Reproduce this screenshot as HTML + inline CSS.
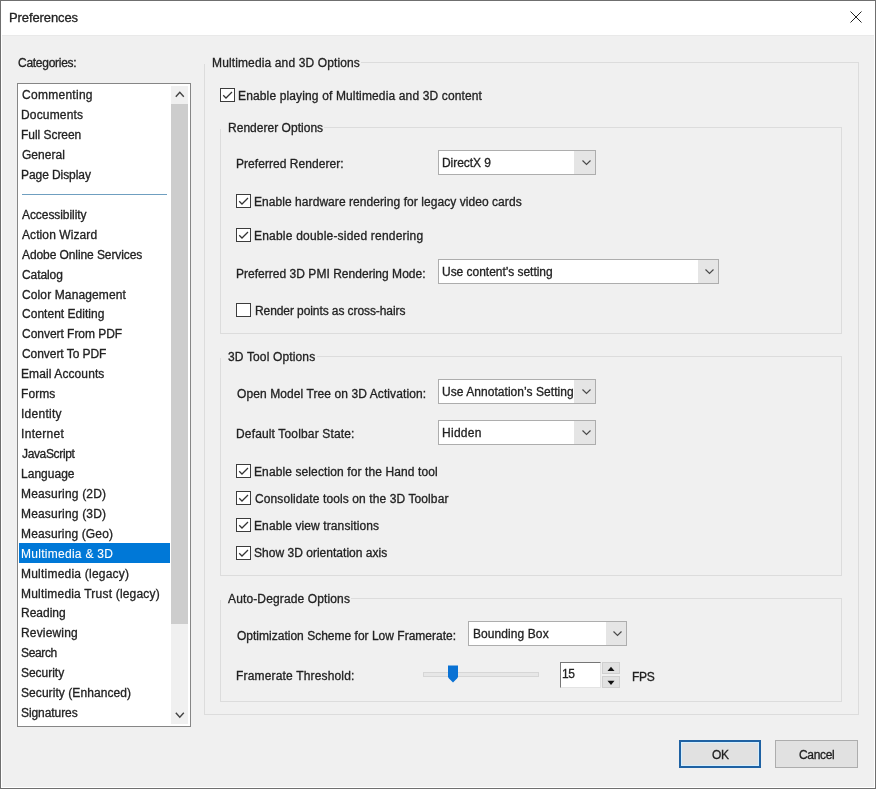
<!DOCTYPE html>
<html><head><meta charset="utf-8"><title>Preferences</title>
<style>
html,body{margin:0;padding:0;width:876px;height:789px;overflow:hidden;background:#f0f0f0}
body{position:relative;font-family:"Liberation Sans", sans-serif;}
.win{position:absolute;left:0;top:0;width:876px;height:789px;box-sizing:border-box;border:1px solid #6f6f6f;background:#f0f0f0}
.title{position:absolute;left:1px;top:1px;width:874px;height:34px;background:#fff;border-bottom:1px solid #e9e9e9}
.t{position:absolute;font-size:12px;line-height:14px;white-space:nowrap;will-change:transform;color:#222;-webkit-text-stroke:0.3px #222}
.cb{position:absolute;width:15px;height:14px;border:1px solid #3c3c3c;box-sizing:border-box;background:#fff}
.dd{position:absolute;border:1px solid #adadad;background:#fff}
.ddb{position:absolute;right:0;top:0;bottom:0;background:#e5e5e5}
</style></head><body>
<div class="win"></div>
<div class="title"></div>
<div style="position:absolute;left:874px;top:1px;width:1px;height:787px;background:#fff"></div>
<div style="position:absolute;left:1px;top:787px;width:874px;height:1px;background:#fff"></div>
<div style="position:absolute;left:1px;top:1px;width:1px;height:787px;background:#fff"></div>
<div class="t" style="left:9.20px;top:10.00px;font-size:13px;line-height:15px;letter-spacing:-0.100px;">Preferences</div>
<svg width="14" height="14" style="position:absolute;left:849px;top:10.3px"><path d="M1.5 1.5 L12.5 12.5 M12.5 1.5 L1.5 12.5" fill="none" stroke="#222" stroke-width="1"/></svg>
<div class="t" style="left:17.70px;top:56.10px;letter-spacing:-0.270px;">Categories:</div>
<div style="position:absolute;left:17px;top:83px;width:174px;height:644px;border:1px solid #868686;background:#fff;box-sizing:border-box"></div>
<div style="position:absolute;left:171px;top:86px;width:17px;height:638px;background:#f0f0f0"></div>
<div style="position:absolute;left:171px;top:104px;width:17px;height:520px;background:#cdcdcd"></div>
<svg width="10" height="7" style="position:absolute;left:175.2px;top:91.3px"><path d="M0.8 5.8 L4.8 1.3 L8.8 5.8" fill="none" stroke="#444" stroke-width="1.4"/></svg>
<svg width="10" height="7" style="position:absolute;left:175.2px;top:711.8px"><path d="M0.8 0.8 L4.8 5.3 L8.8 0.8" fill="none" stroke="#444" stroke-width="1.4"/></svg>
<div class="t" style="left:22.20px;top:88.20px;letter-spacing:0.278px;">Commenting</div>
<div class="t" style="left:21.20px;top:108.10px;letter-spacing:0.162px;">Documents</div>
<div class="t" style="left:21.20px;top:128.10px;letter-spacing:-0.040px;">Full Screen</div>
<div class="t" style="left:22.20px;top:148.00px;letter-spacing:0.033px;">General</div>
<div class="t" style="left:21.20px;top:167.90px;letter-spacing:-0.073px;">Page Display</div>
<div style="position:absolute;left:22px;top:194px;width:145px;height:1px;background:#6f9fc0"></div>
<div class="t" style="left:22.20px;top:207.80px;letter-spacing:-0.067px;">Accessibility</div>
<div class="t" style="left:22.20px;top:227.70px;letter-spacing:0.092px;">Action Wizard</div>
<div class="t" style="left:22.20px;top:247.60px;letter-spacing:-0.090px;">Adobe Online Services</div>
<div class="t" style="left:22.20px;top:267.60px;letter-spacing:-0.083px;">Catalog</div>
<div class="t" style="left:22.20px;top:287.50px;letter-spacing:0.120px;">Color Management</div>
<div class="t" style="left:22.20px;top:307.40px;letter-spacing:0.021px;">Content Editing</div>
<div class="t" style="left:22.20px;top:327.40px;letter-spacing:-0.033px;">Convert From PDF</div>
<div class="t" style="left:22.20px;top:347.30px;letter-spacing:-0.054px;">Convert To PDF</div>
<div class="t" style="left:21.20px;top:367.20px;letter-spacing:0.100px;">Email Accounts</div>
<div class="t" style="left:21.20px;top:387.10px;letter-spacing:0.075px;">Forms</div>
<div class="t" style="left:21.20px;top:407.10px;letter-spacing:0.271px;">Identity</div>
<div class="t" style="left:21.20px;top:427.00px;letter-spacing:0.314px;">Internet</div>
<div class="t" style="left:22.13px;top:446.90px;letter-spacing:-0.350px;">JavaScript</div>
<div class="t" style="left:21.20px;top:466.90px;letter-spacing:0.014px;">Language</div>
<div class="t" style="left:21.20px;top:486.80px;letter-spacing:0.177px;">Measuring (2D)</div>
<div class="t" style="left:21.20px;top:506.70px;letter-spacing:0.177px;">Measuring (3D)</div>
<div class="t" style="left:21.20px;top:526.70px;letter-spacing:0.136px;">Measuring (Geo)</div>
<div style="position:absolute;left:19px;top:543px;width:151px;height:20px;background:#0078d7"></div>
<div class="t" style="left:21.20px;top:546.60px;letter-spacing:0.279px;color:#fff;-webkit-text-stroke:0.1px #fff">Multimedia &amp; 3D</div>
<div class="t" style="left:21.20px;top:566.50px;letter-spacing:0.222px;">Multimedia (legacy)</div>
<div class="t" style="left:21.20px;top:586.50px;letter-spacing:0.196px;">Multimedia Trust (legacy)</div>
<div class="t" style="left:21.20px;top:606.40px;letter-spacing:0.000px;">Reading</div>
<div class="t" style="left:21.20px;top:626.30px;letter-spacing:0.162px;">Reviewing</div>
<div class="t" style="left:21.17px;top:646.20px;letter-spacing:-0.350px;">Search</div>
<div class="t" style="left:21.20px;top:666.20px;letter-spacing:-0.029px;">Security</div>
<div class="t" style="left:21.20px;top:686.10px;letter-spacing:0.067px;">Security (Enhanced)</div>
<div class="t" style="left:21.20px;top:706.00px;letter-spacing:-0.078px;">Signatures</div>
<div style="position:absolute;left:204px;top:62px;width:655px;height:653px;border:1px solid #dcdcdc;box-sizing:border-box"></div>
<div style="position:absolute;left:204px;top:61px;width:157.3px;height:3px;background:#f0f0f0"></div>
<div class="t" style="left:211.90px;top:55.70px;letter-spacing:0.129px;">Multimedia and 3D Options</div>
<div class="cb" style="left:220px;top:88px"><svg width="15" height="14" style="position:absolute;left:-1px;top:-1px"><path d="M3.2 7.2 L6 10 L12 4" fill="none" stroke="#333" stroke-width="1.25"/></svg></div>
<div class="t" style="left:238.00px;top:88.50px;letter-spacing:0.138px;">Enable playing of Multimedia and 3D content</div>
<div style="position:absolute;left:220px;top:127px;width:622px;height:207px;border:1px solid #dcdcdc;box-sizing:border-box"></div>
<div style="position:absolute;left:220px;top:126px;width:104.40000000000003px;height:3px;background:#f0f0f0"></div>
<div class="t" style="left:227.70px;top:121.00px;letter-spacing:0.027px;">Renderer Options</div>
<div class="t" style="left:236.10px;top:157.20px;letter-spacing:0.050px;">Preferred Renderer:</div>
<div class="dd" style="left:438px;top:150px;width:156px;height:23px"><div class="ddb" style="width:21px"></div><svg width="10" height="6" style="position:absolute;left:143px;top:9px"><path d="M0.5 0.5 L4.5 4.5 L8.5 0.5" fill="none" stroke="#4a4a4a" stroke-width="1.15"/></svg></div>
<div class="t" style="left:441.70px;top:155.80px;letter-spacing:-0.062px;">DirectX 9</div>
<div class="cb" style="left:236px;top:194px"><svg width="15" height="14" style="position:absolute;left:-1px;top:-1px"><path d="M3.2 7.2 L6 10 L12 4" fill="none" stroke="#333" stroke-width="1.25"/></svg></div>
<div class="t" style="left:254.40px;top:194.50px;letter-spacing:0.060px;">Enable hardware rendering for legacy video cards</div>
<div class="cb" style="left:236px;top:228px"><svg width="15" height="14" style="position:absolute;left:-1px;top:-1px"><path d="M3.2 7.2 L6 10 L12 4" fill="none" stroke="#333" stroke-width="1.25"/></svg></div>
<div class="t" style="left:254.40px;top:228.80px;letter-spacing:0.204px;">Enable double-sided rendering</div>
<div class="t" style="left:236.00px;top:266.80px;letter-spacing:0.026px;">Preferred 3D PMI Rendering Mode:</div>
<div class="dd" style="left:438px;top:259px;width:279px;height:23px"><div class="ddb" style="width:20px"></div><svg width="10" height="6" style="position:absolute;left:266px;top:9px"><path d="M0.5 0.5 L4.5 4.5 L8.5 0.5" fill="none" stroke="#4a4a4a" stroke-width="1.15"/></svg></div>
<div class="t" style="left:441.50px;top:264.90px;letter-spacing:-0.025px;">Use content&#8217;s setting</div>
<div class="cb" style="left:236px;top:303px"></div>
<div class="t" style="left:254.50px;top:303.80px;letter-spacing:-0.085px;">Render points as cross-hairs</div>
<div style="position:absolute;left:220px;top:356px;width:622px;height:220px;border:1px solid #dcdcdc;box-sizing:border-box"></div>
<div style="position:absolute;left:220px;top:355px;width:96.69999999999999px;height:3px;background:#f0f0f0"></div>
<div class="t" style="left:228.40px;top:350.20px;letter-spacing:0.143px;">3D Tool Options</div>
<div class="t" style="left:236.80px;top:386.80px;letter-spacing:0.091px;">Open Model Tree on 3D Activation:</div>
<div class="dd" style="left:438px;top:379px;width:156px;height:23px"><div class="ddb" style="width:21px"></div><svg width="10" height="6" style="position:absolute;left:143px;top:9px"><path d="M0.5 0.5 L4.5 4.5 L8.5 0.5" fill="none" stroke="#4a4a4a" stroke-width="1.15"/></svg></div>
<div class="t" style="left:441.70px;top:384.80px;letter-spacing:0.048px;">Use Annotation&#8217;s Setting</div>
<div class="t" style="left:235.80px;top:427.30px;letter-spacing:0.152px;">Default Toolbar State:</div>
<div class="dd" style="left:438px;top:420px;width:156px;height:23px"><div class="ddb" style="width:21px"></div><svg width="10" height="6" style="position:absolute;left:143px;top:9px"><path d="M0.5 0.5 L4.5 4.5 L8.5 0.5" fill="none" stroke="#4a4a4a" stroke-width="1.15"/></svg></div>
<div class="t" style="left:441.70px;top:425.60px;letter-spacing:0.280px;">Hidden</div>
<div class="cb" style="left:236px;top:464px"><svg width="15" height="14" style="position:absolute;left:-1px;top:-1px"><path d="M3.2 7.2 L6 10 L12 4" fill="none" stroke="#333" stroke-width="1.25"/></svg></div>
<div class="t" style="left:253.80px;top:464.90px;letter-spacing:0.106px;">Enable selection for the Hand tool</div>
<div class="cb" style="left:236px;top:491px"><svg width="15" height="14" style="position:absolute;left:-1px;top:-1px"><path d="M3.2 7.2 L6 10 L12 4" fill="none" stroke="#333" stroke-width="1.25"/></svg></div>
<div class="t" style="left:254.80px;top:492.10px;letter-spacing:0.103px;">Consolidate tools on the 3D Toolbar</div>
<div class="cb" style="left:236px;top:518px"><svg width="15" height="14" style="position:absolute;left:-1px;top:-1px"><path d="M3.2 7.2 L6 10 L12 4" fill="none" stroke="#333" stroke-width="1.25"/></svg></div>
<div class="t" style="left:253.80px;top:519.30px;letter-spacing:0.105px;">Enable view transitions</div>
<div class="cb" style="left:236px;top:546px"><svg width="15" height="14" style="position:absolute;left:-1px;top:-1px"><path d="M3.2 7.2 L6 10 L12 4" fill="none" stroke="#333" stroke-width="1.25"/></svg></div>
<div class="t" style="left:253.80px;top:546.40px;letter-spacing:0.022px;">Show 3D orientation axis</div>
<div style="position:absolute;left:220px;top:598px;width:622px;height:104px;border:1px solid #dcdcdc;box-sizing:border-box"></div>
<div style="position:absolute;left:220px;top:597px;width:131.2px;height:3px;background:#f0f0f0"></div>
<div class="t" style="left:228.40px;top:592.40px;letter-spacing:0.132px;">Auto-Degrade Options</div>
<div class="t" style="left:236.80px;top:629.00px;letter-spacing:0.008px;">Optimization Scheme for Low Framerate:</div>
<div class="dd" style="left:468px;top:621px;width:157px;height:23px"><div class="ddb" style="width:20px"></div><svg width="10" height="6" style="position:absolute;left:144px;top:9px"><path d="M0.5 0.5 L4.5 4.5 L8.5 0.5" fill="none" stroke="#4a4a4a" stroke-width="1.15"/></svg></div>
<div class="t" style="left:472.50px;top:626.60px;letter-spacing:0.082px;">Bounding Box</div>
<div class="t" style="left:235.80px;top:669.30px;letter-spacing:0.168px;">Framerate Threshold:</div>
<div style="position:absolute;left:423px;top:672px;width:116px;height:5px;background:#e7e7e7;border:1px solid #d6d6d6;box-sizing:border-box"></div>
<svg width="11" height="18" style="position:absolute;left:448px;top:665px"><path d="M0 0.5 H10 V11.5 Q10 12.5 9 13.5 L5 17.5 L1 13.5 Q0 12.5 0 11.5 Z" fill="#0a72d4"/></svg>
<div style="position:absolute;left:560px;top:662px;width:41px;height:26px;background:#fff;border-left:1px solid #767676;border-top:1px solid #767676;border-right:1px solid #e3e3e3;border-bottom:1px solid #e3e3e3;box-sizing:border-box"></div>
<div class="t" style="left:561.77px;top:666.70px;letter-spacing:-0.350px;">15</div>
<div style="position:absolute;left:602px;top:662px;width:18px;height:12px;background:#e1e1e1;border:1px solid #cfcfcf;box-sizing:border-box"></div>
<div style="position:absolute;left:602px;top:676px;width:18px;height:12px;background:#e1e1e1;border:1px solid #cfcfcf;box-sizing:border-box"></div>
<svg width="9" height="6" style="position:absolute;left:607px;top:666px"><path d="M0.5 5 L4 0.8 L7.5 5 Z" fill="#111"/></svg>
<svg width="9" height="6" style="position:absolute;left:607px;top:679.5px"><path d="M0.5 0.8 L4 5 L7.5 0.8 Z" fill="#111"/></svg>
<div class="t" style="left:631.65px;top:669.50px;letter-spacing:-0.350px;">FPS</div>
<div style="position:absolute;left:679px;top:740px;width:82px;height:28px;background:#e1e1e1;border:2px solid #1f62a3;box-shadow:inset 0 0 0 1px #d4efff;box-sizing:border-box"></div>
<div class="t" style="left:711.57px;top:748.00px;letter-spacing:-0.350px;">OK</div>
<div style="position:absolute;left:775px;top:740px;width:83px;height:28px;background:#e1e1e1;border:1px solid #adadad;box-sizing:border-box"></div>
<div class="t" style="left:798.70px;top:748.00px;letter-spacing:-0.340px;">Cancel</div>
</body></html>
